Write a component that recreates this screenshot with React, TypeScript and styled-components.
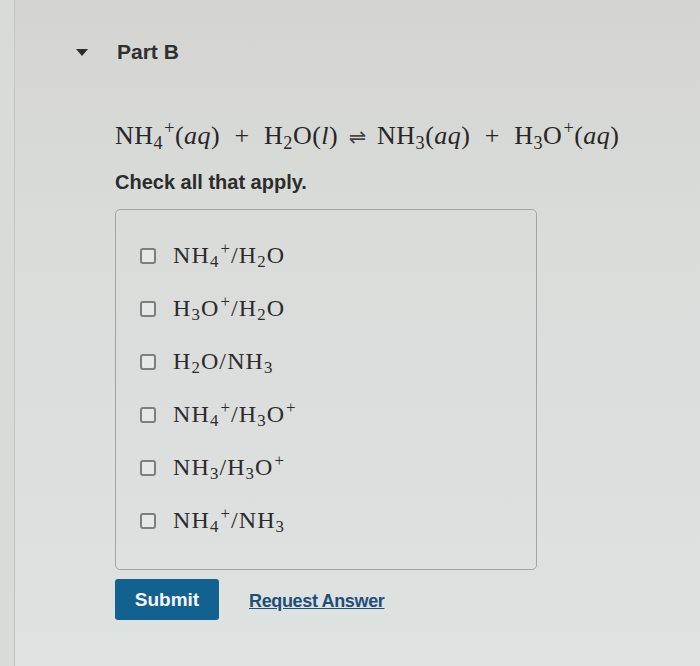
import React from 'react';
import styled, { createGlobalStyle } from 'styled-components';

const GlobalStyle = createGlobalStyle`
  html, body {
    margin: 0;
    padding: 0;
  }
  body {
    background: #d9dbd9;
    color: #2a2b2b;
    font-family: "Liberation Sans", Arial, sans-serif;
  }
`;

const Page = styled.div`
  min-height: 666px;
  box-sizing: border-box;
  margin-left: 14px;
  border-left: 1px solid #c2c4c2;
  background: linear-gradient(180deg, #d4d5d2 0%, #dadcda 35%, #dee2e1 100%);
  padding-top: 38px;
`;

const Header = styled.div`
  display: flex;
  align-items: center;
  padding-left: 61px;
  gap: 29px;
`;

const Caret = styled.span`
  width: 0;
  height: 0;
  border-left: 6px solid transparent;
  border-right: 6px solid transparent;
  border-top: 7px solid #2c2c2c;
`;

const PartTitle = styled.h2`
  margin: 0;
  font-size: 21px;
  line-height: 28px;
  font-weight: 700;
  color: #2f3030;
`;

const Body = styled.div`
  padding-left: 100px;
`;

const Equation = styled.div`
  margin-top: 53px;
  font-family: "Liberation Serif", "DejaVu Serif", serif;
  font-size: 26px;
  line-height: 34px;
  letter-spacing: 0.5px;
  color: #262626;
  white-space: nowrap;
`;

const Sub = styled.sub`
  font-size: 0.7em;
  line-height: 0;
  vertical-align: -0.25em;
`;

const Sup = styled.sup`
  font-size: 0.7em;
  line-height: 0;
  vertical-align: 0.55em;
  margin-left: 1px;
`;

const Op = styled.span`
  margin: 0 0.55em;
`;

const Arrow = styled.span`
  margin: 0 0.5em;
  font-family: "DejaVu Sans", sans-serif;
  font-size: 0.8em;
  color: #444;
`;

const Instructions = styled.p`
  margin: 15px 0 0;
  font-size: 20px;
  line-height: 26px;
  font-weight: 700;
  color: #2b2c2c;
`;

const OptionsBox = styled.div`
  box-sizing: border-box;
  width: 422px;
  height: 361px;
  margin-top: 14px;
  border: 1px solid #a3a5a4;
  border-radius: 5px;
  padding: 30px 0 0 24px;
  display: flex;
  flex-direction: column;
  gap: 22px;
`;

const OptionRow = styled.label`
  display: flex;
  align-items: center;
  gap: 17px;
  height: 31px;
`;

const Box = styled.span`
  box-sizing: border-box;
  width: 16px;
  height: 16px;
  border: 2px solid #7d7f7e;
  border-radius: 3px;
  background: #e6e8e7;
`;

const OptionText = styled.span`
  font-family: "Liberation Serif", "DejaVu Serif", serif;
  font-size: 24px;
  letter-spacing: 1.1px;
  color: #2b2b2b;
  white-space: nowrap;
`;

const Actions = styled.div`
  display: flex;
  align-items: center;
  gap: 30px;
  margin-top: 9px;
`;

const SubmitButton = styled.button`
  width: 104px;
  height: 41px;
  border: none;
  border-radius: 3px;
  background: #12618f;
  color: #f4f8fb;
  font-family: "Liberation Sans", Arial, sans-serif;
  font-size: 19px;
  font-weight: 700;
  cursor: pointer;
`;

const RequestLink = styled.a`
  margin-top: 4px;
  font-size: 18px;
  font-weight: 700;
  letter-spacing: -0.35px;
  color: #1d4f78;
  text-decoration: underline;
  cursor: pointer;
`;

const options: React.ReactNode[] = [
  <>NH<Sub>4</Sub><Sup>+</Sup>/H<Sub>2</Sub>O</>,
  <>H<Sub>3</Sub>O<Sup>+</Sup>/H<Sub>2</Sub>O</>,
  <>H<Sub>2</Sub>O/NH<Sub>3</Sub></>,
  <>NH<Sub>4</Sub><Sup>+</Sup>/H<Sub>3</Sub>O<Sup>+</Sup></>,
  <>NH<Sub>3</Sub>/H<Sub>3</Sub>O<Sup>+</Sup></>,
  <>NH<Sub>4</Sub><Sup>+</Sup>/NH<Sub>3</Sub></>,
];

export default function App() {
  return (
    <>
      <GlobalStyle />
      <Page>
        <Header>
          <Caret />
          <PartTitle>Part B</PartTitle>
        </Header>
        <Body>
          <Equation>
            NH<Sub>4</Sub><Sup>+</Sup>(<i>aq</i>)<Op>+</Op>H<Sub>2</Sub>O(<i>l</i>)
            <Arrow>⇌</Arrow>
            NH<Sub>3</Sub>(<i>aq</i>)<Op>+</Op>H<Sub>3</Sub>O<Sup>+</Sup>(<i>aq</i>)
          </Equation>
          <Instructions>Check all that apply.</Instructions>
          <OptionsBox>
            {options.map((label, i) => (
              <OptionRow key={i}>
                <Box />
                <OptionText>{label}</OptionText>
              </OptionRow>
            ))}
          </OptionsBox>
          <Actions>
            <SubmitButton>Submit</SubmitButton>
            <RequestLink>Request Answer</RequestLink>
          </Actions>
        </Body>
      </Page>
    </>
  );
}
